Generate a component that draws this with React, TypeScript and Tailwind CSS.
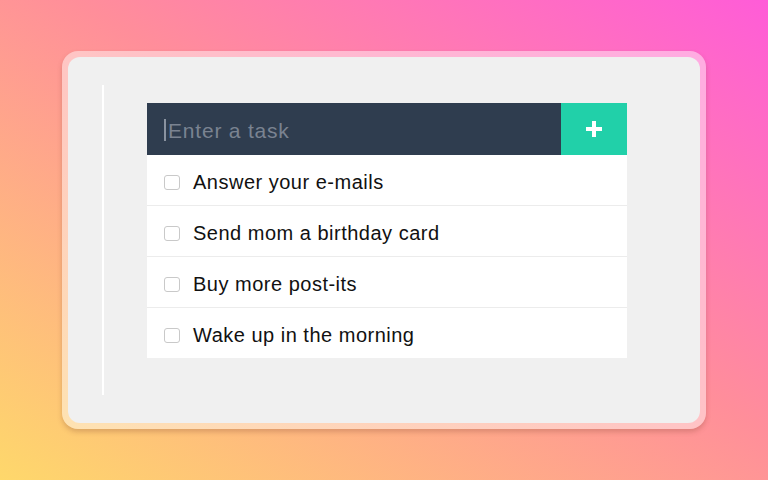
import React from "react";

const tasks = [
  "Answer your e-mails",
  "Send mom a birthday card",
  "Buy more post-its",
  "Wake up in the morning",
];

export default function App() {
  return (
    <div
      className="w-[768px] h-[480px] overflow-hidden bg-[linear-gradient(to_top_right,#fed86b,#ff8e9a_55%,#ff5cd8)] pt-[51px] pl-[62px]"
      style={{ fontFamily: '"Liberation Sans", Arial, sans-serif' }}
    >
      <div className="w-[644px] h-[378px] rounded-[16px] p-[6px] bg-white/45 shadow-[0_3px_5px_rgba(120,60,40,0.25)]">
        <div className="w-full h-full rounded-[12px] bg-[#f0f0f0] flex pl-[34px] pt-[28px]">
          <div className="w-[2px] h-[310px] bg-white" />
          <div className="ml-[43px] mt-[18px] w-[480px] flex flex-col">
            <div className="h-[52px] flex">
              <div className="flex-1 bg-[#2f3d4f] flex items-center pl-[17px] pt-[2px]">
                <span className="w-[2px] h-[22px] bg-[#8a93a0] mr-[2px]" />
                <span className="text-[21px] tracking-[0.8px] text-[#7a8391] leading-none">Enter a task</span>
              </div>
              <div className="w-[66px] bg-[#21d0a9] flex items-center justify-center">
                <svg width="20" height="20" viewBox="0 0 20 20">
                  <path d="M10 2v16M2 10h16" stroke="white" strokeWidth="4" />
                </svg>
              </div>
            </div>
            {tasks.map((t, i) => (
              <div
                key={t}
                className={
                  "h-[46px] box-content bg-white flex items-center pl-[17px] pt-[4px] " +
                  (i < tasks.length - 1 ? "border-b border-[#ececec]" : "")
                }
              >
                <span className="w-[16px] h-[15px] rounded-[3px] border border-[#c9c9c9] bg-white mr-[13px]" />
                <span className="text-[20px] tracking-[0.5px] text-[#111111] leading-none">{t}</span>
              </div>
            ))}
          </div>
        </div>
      </div>
    </div>
  );
}
